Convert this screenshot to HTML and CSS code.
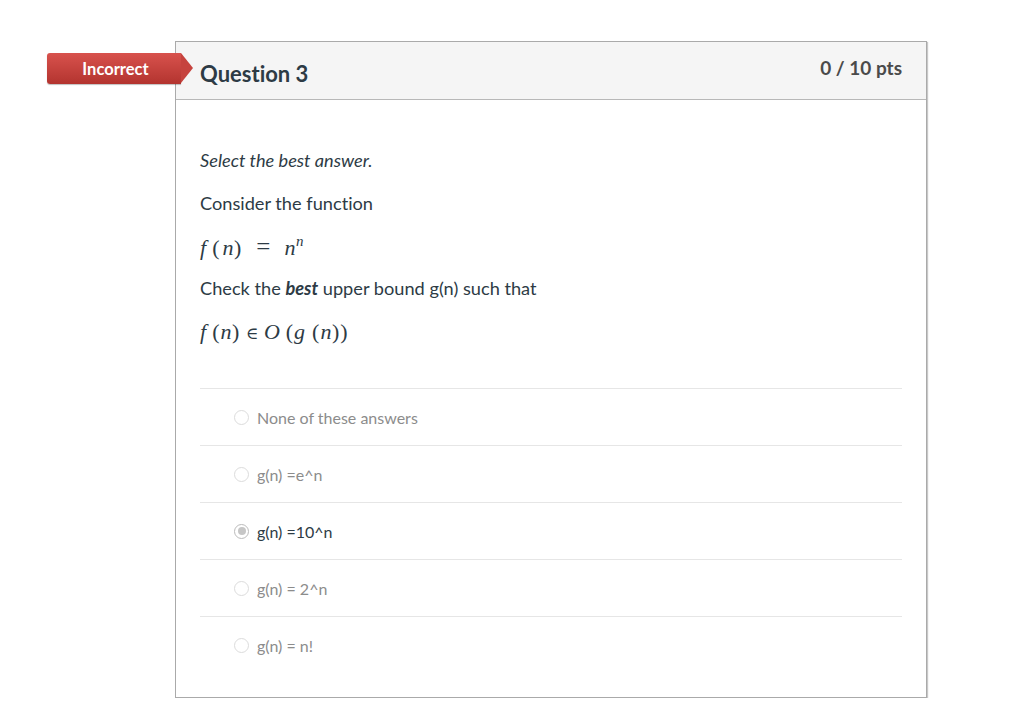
FILE: index.html
```html
<!DOCTYPE html>
<html>
<head>
<meta charset="utf-8">
<link rel="stylesheet" href="styles.css">
</head>
<body>
<div class="page">
  <div class="badge"><span>Incorrect</span></div>
  <div class="card">
    <div class="header">
      <h2 class="title">Question 3</h2>
      <div class="pts">0 / 10 pts</div>
    </div>
    <div class="body">
      <p class="lead"><em>Select the best answer.</em></p>
      <p>Consider the function</p>
      <p class="math wide"><i>f</i> <span class="p">(<i>n</i>)</span><span class="op">=</span><i>n</i><sup><i>n</i></sup></p>
      <p>Check the <b><i>best</i></b> upper bound g(n) such that</p>
      <p class="math"><i>f</i> <span class="p">(<i>n</i>)</span> <span class="in">∈</span> <i>O</i> <span class="p">(<i>g</i> <span class="p">(<i>n</i>)</span>)</span></p>
      <div class="answers">
        <div class="ans"><span class="radio"></span><span>None of these answers</span></div>
        <div class="ans"><span class="radio"></span><span>g(n) =e^n</span></div>
        <div class="ans sel"><span class="radio"></span><span>g(n) =10^n</span></div>
        <div class="ans"><span class="radio"></span><span>g(n) = 2^n</span></div>
        <div class="ans last"><span class="radio"></span><span>g(n) = n!</span></div>
      </div>
    </div>
  </div>
</div>
</body>
</html>
```
FILE: styles.css
```css
html, body { margin: 0; padding: 0; background: #fff; }
body { font-family: Lato, "Open Sans", sans-serif; color: #2d3b45; font-variant-ligatures: none; }
.page { position: relative; padding: 41px 97px 0 175px; }
.card {
  width: 750px;
  border: 1px solid #aaa;
  box-shadow: 1px 1px 1px #c8c8c8;
  background: #fff;
}
.header {
  height: 57px;
  background: #f5f5f5;
  border-bottom: 1px solid #b8b8b8;
  display: flex;
  justify-content: space-between;
  align-items: flex-start;
  padding: 0 24px 0 24px;
}
.title { margin: 18px 0 0; font-size: 22px; font-weight: 700; color: #2d3b45; line-height: 27px; }
.pts { margin-top: 14px; font-size: 19px; font-weight: 700; color: #4a4a4a; line-height: 24px; }
.badge {
  position: absolute;
  left: 47px; top: 53px;
  width: 134px; height: 31px;
  background: linear-gradient(#d8524d, #b3342f);
  border-radius: 3px 0 0 3px;
  color: #fff;
  font-size: 16.5px;
  font-weight: 700;
  display: flex; align-items: center; justify-content: center;
  box-shadow: 0 1px 1px rgba(0,0,0,0.25);
}
.badge::after {
  content: "";
  position: absolute;
  right: -12px; top: 0;
  border-top: 15.5px solid transparent;
  border-bottom: 15.5px solid transparent;
  border-left: 12px solid #c6433e;
}
.badge span { margin-left: 3px; }
.body { padding: 49px 24px 24px 24px; font-size: 18.2px; }
.body p { margin: 0 0 20px; line-height: 23px; }
.body p.math { font-family: "Liberation Serif", "DejaVu Serif", serif; font-size: 22px; line-height: 23px; margin-bottom: 18px; }
.math i { letter-spacing: 0.5px; }
.math .p { letter-spacing: 1px; }
.math.wide .p { letter-spacing: 3px; }
.math .op { margin: 0 13px 0 13px; font-style: normal; }
.math.wide .op { margin: 0 14px 0 12px; font-size: 25px; }
.math .in { font-family: "DejaVu Serif", serif; font-size: 17px; }
.math sup { font-size: 15px; vertical-align: 0; position: relative; top: -9px; line-height: 0; }
.answers { margin-top: 43px; border-top: 1px solid #e6e6e6; }
.ans {
  height: 56px;
  border-bottom: 1px solid #e6e6e6;
  display: flex; align-items: center;
  padding-left: 34px;
  font-size: 16px;
  color: #8c8c8c;
}
.ans.last { border-bottom: none; }
.ans.sel { color: #2d3b45; }
.radio {
  width: 15px; height: 15px;
  border: 1px solid #dcdcdc;
  border-radius: 50%;
  margin-right: 8px;
  box-sizing: border-box;
  background: #fff;
  position: relative;
}
.ans.sel .radio { border-color: #bbb; }
.ans.sel .radio::after {
  content: ""; position: absolute; left: 2.5px; top: 2.5px;
  width: 8px; height: 8px; border-radius: 50%; background: #c6c6c6;
}
```
